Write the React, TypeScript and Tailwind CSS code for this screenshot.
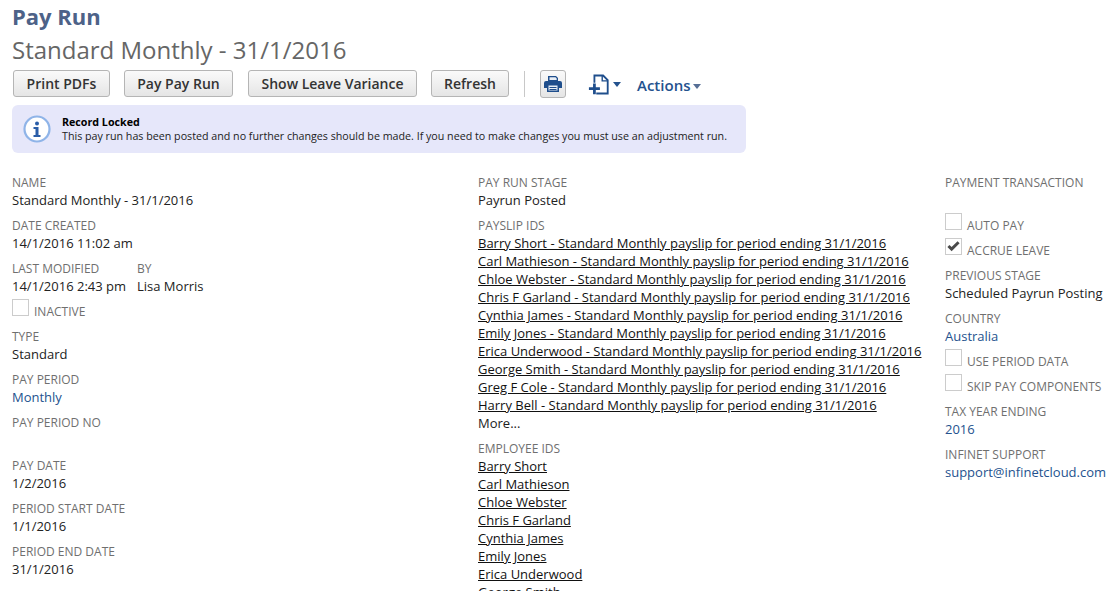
const F = "[font-family:'Open_Sans',sans-serif]";

function Label({ children }: { children: React.ReactNode }) {
  return <div className="h-[18px] text-[12px] leading-[20px] text-[#6f6f6f] whitespace-nowrap">{children}</div>;
}
function Value({ children, blue }: { children?: React.ReactNode; blue?: boolean }) {
  return <div className={`h-[18px] text-[13px] leading-[18px] whitespace-nowrap ${blue ? "text-[#24528e]" : "text-[#222222]"}`}>{children}</div>;
}
function Field({ label, value, blue }: { label: string; value?: string; blue?: boolean }) {
  return (
    <div className="mb-[7px]">
      <Label>{label}</Label>
      <Value blue={blue}>{value}</Value>
    </div>
  );
}
function Check({ label, checked }: { label: string; checked?: boolean }) {
  return (
    <div className="flex h-[18px] mb-[7px] items-start">
      <div className="relative top-[-3px] w-[17px] h-[17px] border border-[#cccccc] bg-white shrink-0">
        {checked && (
          <svg viewBox="0 0 16 16" className="absolute left-0 top-0 w-[15px] h-[15px]">
            <path d="M1.5 8.5 L6 13 L14.5 4.5 L12.3 2.3 L6 8.6 L3.7 6.3 Z" fill="#4a4a4a" />
          </svg>
        )}
      </div>
      <span className="ml-[5px] text-[12px] leading-[20px] text-[#6f6f6f] whitespace-nowrap">{label}</span>
    </div>
  );
}
function Btn({ children, className }: { children: string; className: string }) {
  return (
    <button className={`h-[27px] rounded-[3px] border border-[#b5b5b5] bg-gradient-to-b from-[#fafafa] to-[#e5e5e5] text-[14px] font-semibold text-[#333333] ${className}`}>
      {children}
    </button>
  );
}

const payslips = [
  "Barry Short", "Carl Mathieson", "Chloe Webster", "Chris F Garland", "Cynthia James",
  "Emily Jones", "Erica Underwood", "George Smith", "Greg F Cole", "Harry Bell",
];
const employees = ["Barry Short", "Carl Mathieson", "Chloe Webster", "Chris F Garland", "Cynthia James", "Emily Jones", "Erica Underwood", "George Smith"];

function LinkRow({ children }: { children: string }) {
  return <div className="h-[18px] text-[13px] leading-[18px] text-[#111111] underline whitespace-nowrap">{children}</div>;
}

export default function App() {
  return (
    <div className={`${F} relative h-[591px] w-[1120px] overflow-hidden bg-white pl-[12px]`}>
      <h1 className="h-[28px] pt-[2px] text-[22px] leading-[28px] font-bold text-[#4d6288]">Pay Run</h1>
      <h2 className="h-[36px] pt-[4px] text-[24px] leading-[36px] text-[#666666]">Standard Monthly - 31/1/2016</h2>
      <div className="mt-[6px] ml-[1px] flex items-center h-[27px]">
        <Btn className="w-[97px]">Print PDFs</Btn>
        <Btn className="w-[109px] ml-[14px]">Pay Pay Run</Btn>
        <Btn className="w-[169px] ml-[15px]">Show Leave Variance</Btn>
        <Btn className="w-[78px] ml-[14px]">Refresh</Btn>
        <div className="ml-[15px] h-[26px] w-px bg-[#c8c8c8]" />
        <button className="ml-[15px] flex h-[28px] w-[26px] items-center justify-center rounded-[3px] border border-[#b5b5b5] bg-gradient-to-b from-[#fafafa] to-[#e5e5e5]">
          <svg viewBox="0 0 20 20" className="h-[20px] w-[20px]">
            <path d="M5 2h8l2 2v3H5z" fill="#1f4e8c" />
            <path d="M6.5 3.2h6l1.2 1.2V6H6.5z" fill="#e8eef6" />
            <path d="M3 7h14a2 2 0 0 1 2 2v5h-3v4H4v-4H1V9a2 2 0 0 1 2-2z" fill="#1f4e8c" />
            <path d="M5.5 11.5h9v5h-9z" fill="#e8eef6" />
            <path d="M6.5 13h7v1h-7zM6.5 15h7v1h-7z" fill="#1f4e8c" />
          </svg>
        </button>
        <svg viewBox="0 0 24 22" className="ml-[22px] mt-[2px] h-[21px] w-[22px] shrink-0">
          <path d="M7 9V1.2h9.5l5 5v14.6H9" fill="none" stroke="#1f4e8c" strokeWidth="2" />
          <path d="M15.5 1.5V7h6" fill="none" stroke="#1f4e8c" strokeWidth="1.5" />
          <path d="M5.5 10h3v4h4.5v3H8.5v4.5h-3V17H1v-3h4.5z" fill="#1f4e8c" />
        </svg>
        <svg viewBox="0 0 8 5" className="ml-[3px] mt-[2px] h-[5px] w-[8px] shrink-0"><path d="M0 0h8L4 5z" fill="#24528e" /></svg>
        <span className="ml-[16px] mt-[3px] text-[15px] font-semibold text-[#24528e]">Actions</span>
        <svg viewBox="0 0 8 5" className="ml-[3px] mt-[5px] h-[5px] w-[8px] shrink-0"><path d="M0 0h8L4 5z" fill="#566f96" /></svg>
      </div>
      <div className="mt-[8px] flex h-[48px] w-[734px] items-center rounded-[6px] bg-[#e6e7fa] pl-[11px]">
        <svg viewBox="0 0 28 28" className="h-[28px] w-[28px] shrink-0">
          <circle cx="14" cy="14" r="12.5" fill="#ffffff" stroke="#8fb4e8" strokeWidth="2.2" />
          <circle cx="14" cy="8.5" r="2" fill="#2a5da8" />
          <path d="M10.5 12h5v8h2v2h-7v-2h2v-6h-2z" fill="#2a5da8" />
        </svg>
        <div className="ml-[11px] text-[10.7px] leading-[14px] text-[#222222] whitespace-nowrap">
          <div className="font-bold text-black">Record Locked</div>
          <div>This pay run has been posted and no further changes should be made. If you need to make changes you must use an adjustment run.</div>
        </div>
      </div>
      <div className="mt-[20px] flex">
        <div className="w-[466px] shrink-0">
          <Field label="NAME" value="Standard Monthly - 31/1/2016" />
          <Field label="DATE CREATED" value="14/1/2016 11:02 am" />
          <div className="flex mb-[7px]">
            <div className="w-[125px]"><Label>LAST MODIFIED</Label><Value>14/1/2016 2:43 pm</Value></div>
            <div><Label>BY</Label><Value>Lisa Morris</Value></div>
          </div>
          <Check label="INACTIVE" />
          <Field label="TYPE" value="Standard" />
          <Field label="PAY PERIOD" value="Monthly" blue />
          <Field label="PAY PERIOD NO" />
          <Field label="PAY DATE" value="1/2/2016" />
          <Field label="PERIOD START DATE" value="1/1/2016" />
          <Field label="PERIOD END DATE" value="31/1/2016" />
        </div>
        <div className="w-[467px] shrink-0">
          <Field label="PAY RUN STAGE" value="Payrun Posted" />
          <Label>PAYSLIP IDS</Label>
          {payslips.map((p) => (
            <LinkRow key={p}>{`${p} - Standard Monthly payslip for period ending 31/1/2016`}</LinkRow>
          ))}
          <Value>More...</Value>
          <div className="mt-[7px]"><Label>EMPLOYEE IDS</Label></div>
          {employees.map((p) => <LinkRow key={p}>{p}</LinkRow>)}
        </div>
        <div className="flex-1">
          <Field label="PAYMENT TRANSACTION" />
          <Check label="AUTO PAY" />
          <Check label="ACCRUE LEAVE" checked />
          <Field label="PREVIOUS STAGE" value="Scheduled Payrun Posting" />
          <Field label="COUNTRY" value="Australia" blue />
          <Check label="USE PERIOD DATA" />
          <Check label="SKIP PAY COMPONENTS" />
          <Field label="TAX YEAR ENDING" value="2016" blue />
          <Field label="INFINET SUPPORT" value="support@infinetcloud.com" blue />
        </div>
      </div>
    </div>
  );
}
